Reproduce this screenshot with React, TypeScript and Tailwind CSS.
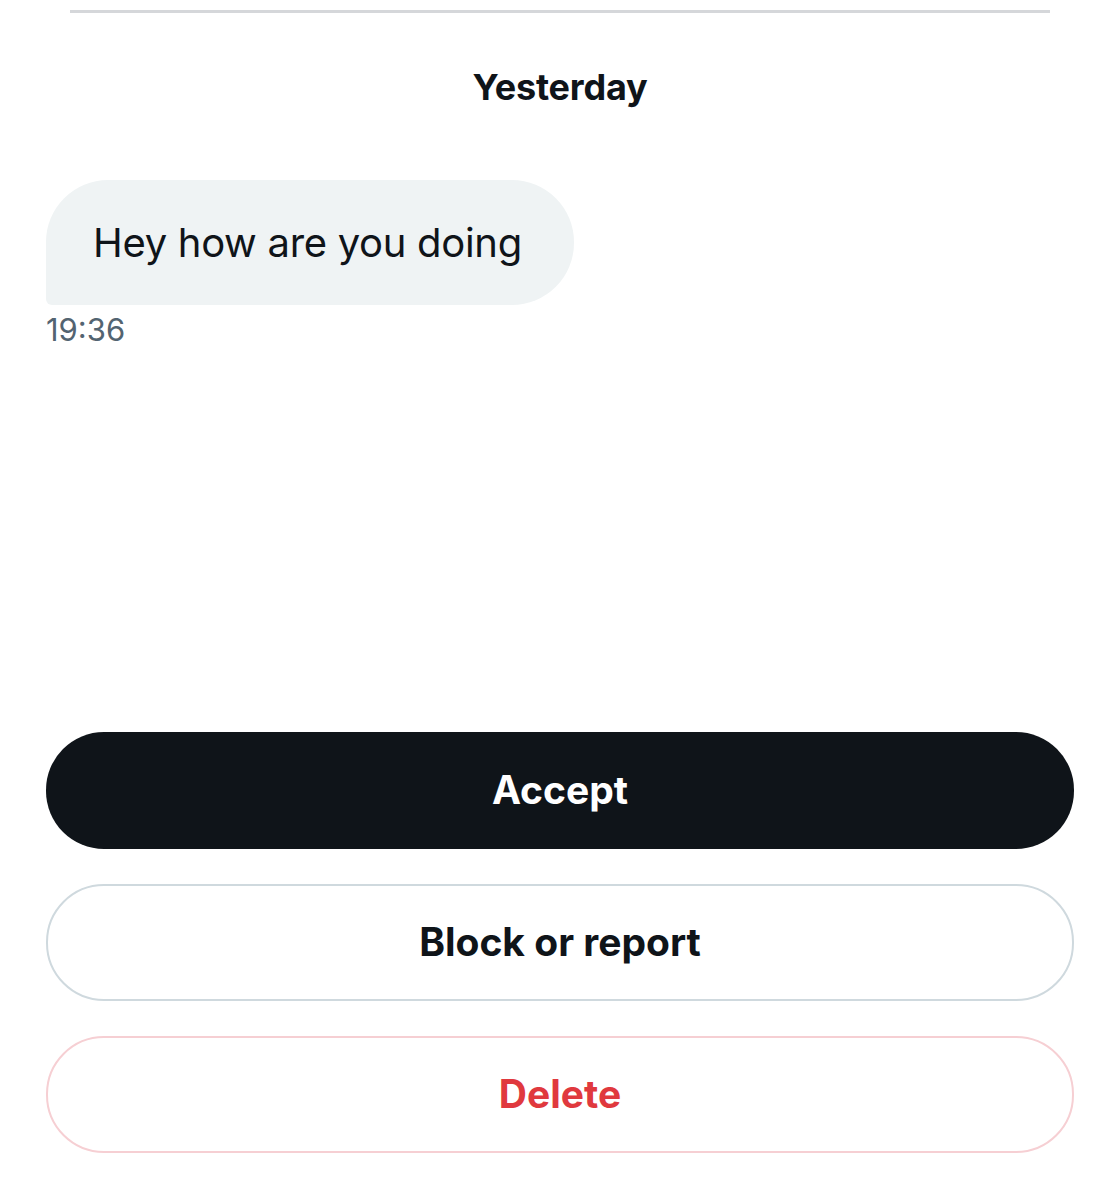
import React from "react";

export default function App() {
  return (
    <div className="w-[1120px] h-[1200px] bg-white flex flex-col px-[46px]" style={{ fontFamily: "Inter, 'Noto Sans', sans-serif" }}>
      <div className="mt-[10px] mx-[24px] h-[3px] bg-[#d5d7da]" />
      <div className="mt-[51px] h-[46px] flex items-center justify-center text-[36px] font-bold text-[#0f1419] tracking-[-0.2px]">
        Yesterday
      </div>
      <div className="mt-[70px] flex">
        <div className="h-[125px] w-[528px] bg-[#eff3f4] rounded-[62px] rounded-bl-[6px] flex items-center pl-[47px] text-[40px] text-[#0f1419] tracking-[-0.3px]">
          Hey how are you doing
        </div>
      </div>
      <div className="mt-[5px] text-[31px] leading-[40px] text-[#536471]">19:36</div>
      <div className="mt-[382px] flex flex-col gap-[35px]">
        <button className="h-[117px] w-full rounded-[58px] bg-[#0f1419] text-white text-[39px] font-bold">Accept</button>
        <button className="h-[117px] w-full rounded-[58px] border-[2px] border-[#cfd9de] bg-white text-[#0f1419] text-[39px] font-bold">Block or report</button>
        <button className="h-[117px] w-full rounded-[58px] border-[2px] border-[#f6cfd3] bg-white text-[#e0393e] text-[39px] font-bold">Delete</button>
      </div>
    </div>
  );
}
